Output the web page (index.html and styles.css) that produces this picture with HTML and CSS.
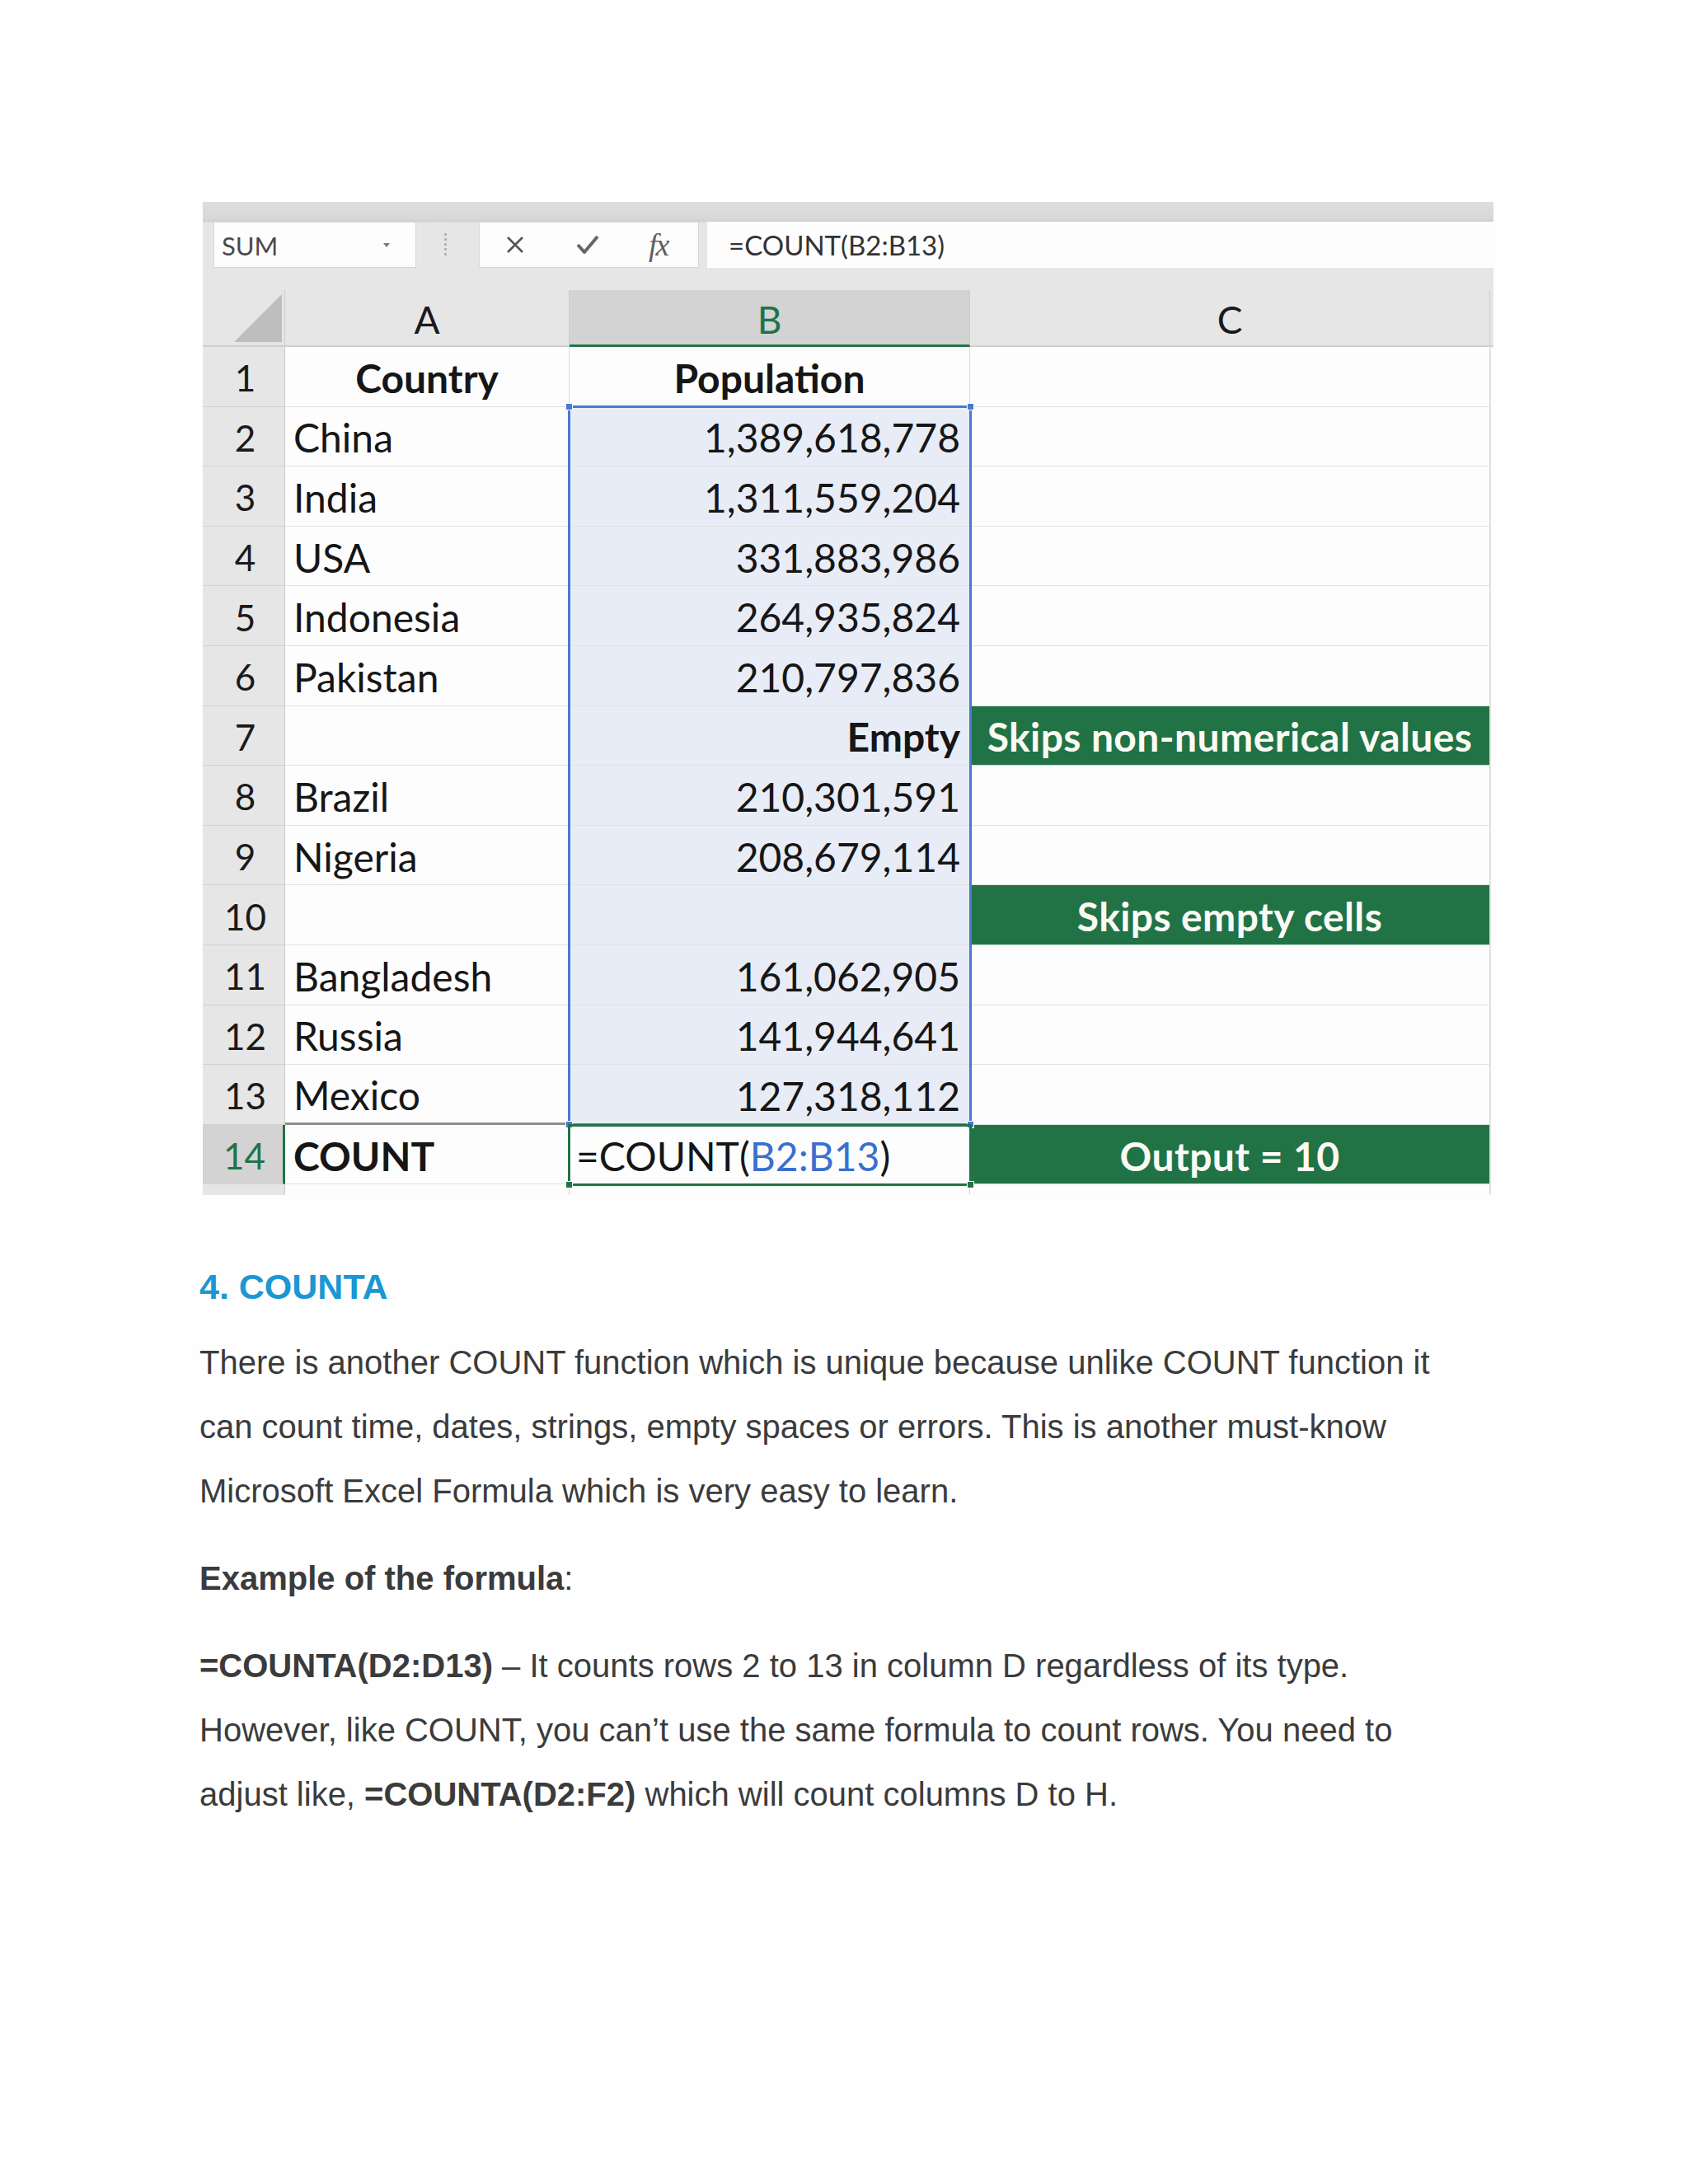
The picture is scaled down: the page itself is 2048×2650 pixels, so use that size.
FILE: index.html
```html
<!DOCTYPE html>
<html lang="en">
<head>
<meta charset="utf-8">
<title>COUNT and COUNTA</title>
<link rel="stylesheet" href="styles.css">
</head>
<body>
<div class="page">
  <div class="sheet">
    <div class="toolbar">
      <div class="namebox"><span class="name">SUM</span><span class="caret"></span></div>
      <div class="sep"></div>
      <div class="fxbox">
        <svg class="ico-x" width="24" height="24" viewBox="0 0 24 24"><path d="M3 3 L21 21 M21 3 L3 21" stroke="#555" stroke-width="2.6" fill="none"/></svg>
        <svg class="ico-ok" width="28" height="24" viewBox="0 0 28 24"><path d="M2 12 L10 21 L26 2" stroke="#666" stroke-width="4" fill="none" stroke-linejoin="round"/></svg>
        <span class="fx">fx</span>
      </div>
      <div class="formula">=COUNT(B2:B13)</div>
    </div>
    <div class="grid">
      <div class="corner"><svg width="58" height="58" viewBox="0 0 58 58"><path d="M58 0 L58 58 L0 58 Z" fill="#bdbdbd"/></svg></div>
      <div class="colhead">A</div>
      <div class="colhead active">B</div>
      <div class="colhead">C</div>
      <div class="edge head"></div>

      <div class="rowhead">1</div>
      <div class="cell center b">Country</div>
      <div class="cell center b">Population</div>
      <div class="cell"></div>
      <div class="edge"></div>

      <div class="rowhead">2</div>
      <div class="cell left">China</div>
      <div class="cell right sel">1,389,618,778</div>
      <div class="cell"></div>
      <div class="edge"></div>

      <div class="rowhead">3</div>
      <div class="cell left">India</div>
      <div class="cell right sel">1,311,559,204</div>
      <div class="cell"></div>
      <div class="edge"></div>

      <div class="rowhead">4</div>
      <div class="cell left">USA</div>
      <div class="cell right sel">331,883,986</div>
      <div class="cell"></div>
      <div class="edge"></div>

      <div class="rowhead">5</div>
      <div class="cell left">Indonesia</div>
      <div class="cell right sel">264,935,824</div>
      <div class="cell"></div>
      <div class="edge"></div>

      <div class="rowhead">6</div>
      <div class="cell left">Pakistan</div>
      <div class="cell right sel">210,797,836</div>
      <div class="cell"></div>
      <div class="edge"></div>

      <div class="rowhead">7</div>
      <div class="cell left"></div>
      <div class="cell right sel b">Empty</div>
      <div class="cell green">Skips non-numerical values</div>
      <div class="edge"></div>

      <div class="rowhead">8</div>
      <div class="cell left">Brazil</div>
      <div class="cell right sel">210,301,591</div>
      <div class="cell"></div>
      <div class="edge"></div>

      <div class="rowhead">9</div>
      <div class="cell left">Nigeria</div>
      <div class="cell right sel">208,679,114</div>
      <div class="cell"></div>
      <div class="edge"></div>

      <div class="rowhead">10</div>
      <div class="cell left"></div>
      <div class="cell right sel"></div>
      <div class="cell green">Skips empty cells</div>
      <div class="edge"></div>

      <div class="rowhead">11</div>
      <div class="cell left">Bangladesh</div>
      <div class="cell right sel">161,062,905</div>
      <div class="cell"></div>
      <div class="edge"></div>

      <div class="rowhead">12</div>
      <div class="cell left">Russia</div>
      <div class="cell right sel">141,944,641</div>
      <div class="cell"></div>
      <div class="edge"></div>

      <div class="rowhead">13</div>
      <div class="cell left thick">Mexico</div>
      <div class="cell right sel">127,318,112</div>
      <div class="cell"></div>
      <div class="edge"></div>

      <div class="rowhead active">14</div>
      <div class="cell left b">COUNT</div>
      <div class="cell left fcell">=COUNT(<span class="ref">B2:B13</span>)</div>
      <div class="cell green">Output = 10</div>
      <div class="edge"></div>

      <div class="rowhead stub"></div>
      <div class="cell stub"></div>
      <div class="cell stub"></div>
      <div class="cell stub"></div>
      <div class="edge"></div>

      <div class="range"><span class="h tl"></span><span class="h tr"></span><span class="h bl"></span><span class="h br"></span></div>
      <div class="activecell"><span class="h bl"></span><span class="h br"></span></div>
    </div>
  </div>

  <article class="text">
    <h2>4. COUNTA</h2>
    <p>There is another COUNT function which is unique because unlike COUNT function it can count time, dates, strings, empty spaces or errors. This is another must-know Microsoft Excel Formula which is very easy to learn.</p>
    <p><strong>Example of the formula</strong>:</p>
    <p><strong>=COUNTA(D2:D13)</strong> – It counts rows 2 to 13 in column D regardless of its type. However, like COUNT, you can’t use the same formula to count rows. You need to adjust like, <strong>=COUNTA(D2:F2)</strong> which will count columns D to H.</p>
  </article>
</div>
</body>
</html>
```

FILE: styles.css
```css
* { box-sizing: border-box; }

html, body {
  margin: 0;
  padding: 0;
  background: #fefefe;
}

.page {
  padding: 245px 0 200px 242px;
  min-height: 2650px;
}

/* ---------- spreadsheet ---------- */
.sheet {
  margin-left: 4px;
  width: 1566px;
  font-family: Lato, "Open Sans", sans-serif;
  color: #161616;
  background: #fdfdfe;
}

.toolbar {
  height: 107px;
  display: flex;
  align-items: flex-start;
  padding: 24px 0 0 13px;
  background: linear-gradient(#dedede 0, #d8d8d8 20px, #d0d0d0 24px, #e6e6e6 25px, #e6e6e6 100%);
}

.namebox {
  width: 246px;
  height: 56px;
  background: #fdfdfe;
  border: 1px solid #d6d6d6;
  display: flex;
  align-items: center;
  padding-left: 9px;
}

.name {
  font-size: 31px;
  color: #4a4a4a;
  padding-top: 2px;
}

.caret {
  margin-left: auto;
  margin-right: 31px;
  width: 0;
  height: 0;
  border-left: 4px solid transparent;
  border-right: 4px solid transparent;
  border-top: 5px solid #7a7a7a;
}

.sep {
  width: 3px;
  height: 27px;
  margin: 14px 39px 0 34px;
  border-left: 3px dotted #b4b4b4;
}

.fxbox {
  width: 267px;
  height: 56px;
  background: #fdfdfe;
  border: 1px solid #d6d6d6;
  display: flex;
  align-items: center;
  padding-left: 31px;
  gap: 62px;
}

.fx {
  font-family: "Liberation Serif", "DejaVu Serif", serif;
  font-style: italic;
  font-size: 38px;
  color: #5e5e5e;
  letter-spacing: -2px;
  margin-left: -2px;
}

.formula {
  flex: 1;
  margin-left: 10px;
  height: 56px;
  background: #fdfdfe;
  display: flex;
  align-items: center;
  padding-left: 26px;
  font-size: 33px;
  color: #333;
}

.grid {
  position: relative;
  display: grid;
  grid-template-columns: 100px 345px 486px 631px 4px;
  grid-template-rows: 69px repeat(14, 72.6px) 13px;
  background: #fdfdfe;
}

.corner {
  background: #e6e6e6;
  border-right: 1px solid #cdcdcd;
  border-bottom: 2px solid #cfcfcf;
  display: flex;
  align-items: flex-end;
  justify-content: flex-end;
  padding: 0 3px 4px 0;
}

.colhead {
  background: #e6e6e6;
  border-right: 1px solid #cdcdcd;
  border-bottom: 2px solid #cfcfcf;
  display: flex;
  align-items: center;
  justify-content: center;
  font-size: 46px;
  color: #1a1a1a;
  padding-top: 4px;
}

.colhead.active {
  background: #d3d3d3;
  color: #217346;
  border-bottom: 3px solid #217346;
}

.edge {
  background: #fdfdfe;
  border-left: 1px solid #e4e4e4;
}
.edge.head { background: #e6e6e6; border-bottom: 2px solid #cfcfcf; }

.rowhead {
  background: #e6e6e6;
  border-right: 1px solid #c8c8c8;
  border-bottom: 1px solid #d2d2d2;
  display: flex;
  align-items: center;
  justify-content: center;
  font-size: 44px;
  color: #1a1a1a;
  padding-top: 3px;
  padding-left: 4px;
}

.rowhead.active {
  background: #d3d3d3;
  color: #217346;
  border-right: 3px solid #217346;
}

.rowhead.stub { border-bottom: none; }

.cell {
  border-right: 1px solid #dadada;
  border-bottom: 1px solid #e2e2e2;
  display: flex;
  align-items: center;
  font-size: 48px;
  padding-top: 3px;
  white-space: nowrap;
  overflow: hidden;
  background: #fdfdfe;
}

.cell.stub { border-bottom: none; }

.left { padding-left: 10px; }
.right { justify-content: flex-end; padding-right: 11px; }
.center { justify-content: center; }
.b { font-weight: 700; }

.sel { background: #e8ecf6; }

.thick { border-bottom: 3px solid #8e8e8e; }

.fcell { padding-left: 8px; }
.ref { color: #3a6fd0; }

.green {
  background: #217346;
  color: #fbfbf4;
  font-weight: 700;
  justify-content: center;
  letter-spacing: 0.4px;
  border-bottom: 1px solid #c9dccf;
}

/* selection overlays */
.range {
  position: absolute;
  left: 443px;
  top: 140px;
  width: 490px;
  height: 874px;
  border: 3px solid #4a79d2;
  pointer-events: none;
}

.activecell {
  position: absolute;
  left: 443px;
  top: 1012px;
  width: 490px;
  height: 75px;
  border: 3px solid #217346;
  pointer-events: none;
}

.h {
  position: absolute;
  width: 9px;
  height: 9px;
  background: #4a79d2;
  border: 1px solid #fff;
}
.activecell .h { background: #217346; }
.tl { left: -6px; top: -6px; }
.tr { right: -6px; top: -6px; }
.bl { left: -6px; bottom: -6px; }
.br { right: -6px; bottom: -6px; }

/* ---------- article text ---------- */
.text {
  width: 1548px;
  margin-top: 86px;
  font-family: "Liberation Sans", Arial, sans-serif;
  color: #3b3b3b;
}

.text h2 {
  margin: 0 0 27px;
  font-size: 43px;
  line-height: 51px;
  font-weight: 700;
  color: #1b97d3;
}

.text p {
  margin: 0 0 28px;
  font-size: 40px;
  line-height: 78px;
}

.text strong { font-weight: 700; }
```
